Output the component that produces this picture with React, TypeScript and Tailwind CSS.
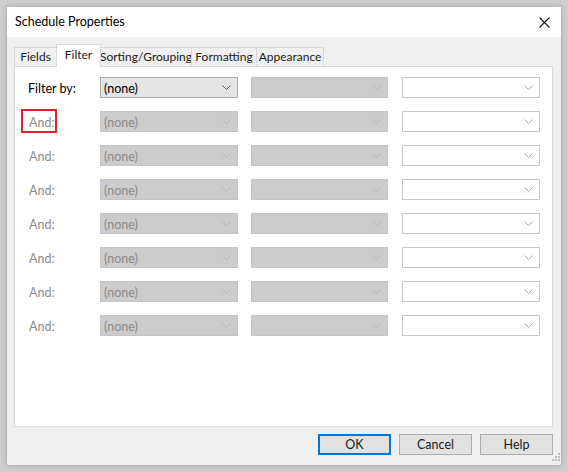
import React from "react";

const font = { fontFamily: 'Lato, "Noto Sans", sans-serif' };

function Chevron({ color }: { color: string }) {
  return (
    <svg width="9" height="5" viewBox="0 0 9 5" className="shrink-0">
      <path d="M0.5 0.5 L4.5 4.5 L8.5 0.5" fill="none" stroke={color} strokeWidth="1" />
    </svg>
  );
}

type Kind = "enabled" | "disabled" | "blank";

function Combo({ kind, text, width }: { kind: Kind; text?: string; width: string }) {
  const styles: Record<Kind, string> = {
    enabled: "bg-[#e5e5e5] border-[#acacac] text-black",
    disabled: "bg-[#cccccc] border-[#c4c4c4] text-[#8a8a8a]",
    blank: "bg-white border-[#c8c8c8] text-black",
  };
  const chevron = kind === "enabled" ? "#5a5a5a" : kind === "disabled" ? "#b4b4b4" : "#a8a8a8";
  return (
    <div className={`${width} h-[21px] border flex items-center justify-between pl-[3px] pr-[6px] ${styles[kind]}`}>
      <span className="text-[12.5px] leading-[15px] pt-px">{text}</span>
      <Chevron color={chevron} />
    </div>
  );
}

function Row({ label, first, boxed }: { label: string; first?: boolean; boxed?: boolean }) {
  return (
    <div className="flex items-center h-[21px]">
      <div className="w-[72px] h-[21px] flex items-center relative">
        <span className={`text-[12.5px] leading-[15px] pt-[2px] ${first ? "text-black" : "text-[#8c8c8c] pl-px"}`}>{label}</span>
        {boxed && (
          <div className="absolute left-[-7px] top-[-2px] w-[36px] h-[24px] border-2 border-[#e0202a]" />
        )}
      </div>
      <Combo kind={first ? "enabled" : "disabled"} text="(none)" width="w-[138px]" />
      <div className="w-[13px]" />
      <Combo kind="disabled" width="w-[137px]" />
      <div className="w-[14px]" />
      <Combo kind="blank" width="w-[138px]" />
    </div>
  );
}

function Tab({ label, width, selected }: { label: string; width: string; selected?: boolean }) {
  return (
    <div
      className={`${width} flex items-center justify-center border-t border-l border-r border-[#d9d9d9] -mr-px text-[12px] ${
        selected ? "h-[23px] bg-white relative z-10 -mb-px pb-[3px]" : "h-[19px] bg-[#f0f0f0]"
      }`}
    >
      {label}
    </div>
  );
}

function Button({ label, primary }: { label: string; primary?: boolean }) {
  return (
    <div
      className={`w-[73px] h-[21px] flex items-center justify-center text-[12.5px] pt-px bg-[#e1e1e1] ${
        primary ? "border-2 border-[#0078d7]" : "border border-[#adadad]"
      }`}
    >
      {label}
    </div>
  );
}

export default function App() {
  const rows = ["And:", "And:", "And:", "And:", "And:", "And:", "And:"];
  return (
    <div className="w-[568px] h-[472px] bg-[#d0d0d0] p-[7px] flex" style={font}>
      <div className="flex-1 flex flex-col bg-[#f0f0f0] shadow-[0_0_0_1px_#b8b8b8,0_0_6px_rgba(0,0,0,0.25)] text-[#1a1a1a]">
        {/* Title bar */}
        <div className="h-[30px] bg-white flex items-center justify-between pl-[8px] pr-[11px] shrink-0">
          <span className="text-[12.5px] text-black">Schedule Properties</span>
          <svg width="11" height="11" viewBox="0 0 11 11">
            <path d="M0.5 0.5 L10.5 10.5 M10.5 0.5 L0.5 10.5" stroke="#1a1a1a" strokeWidth="1.1" />
          </svg>
        </div>

        <div className="flex-1 flex flex-col px-[7px] pt-[7px]">
          {/* Tabs */}
          <div className="flex items-end h-[22px]">
            <Tab label="Fields" width="w-[43px]" />
            <Tab label="Filter" width="w-[45px]" selected />
            <Tab label="Sorting/Grouping" width="w-[92px]" />
            <Tab label="Formatting" width="w-[66px]" />
            <Tab label="Appearance" width="w-[68px]" />
          </div>

          {/* Panel */}
          <div className="w-[539px] h-[361px] bg-white border border-[#d9d9d9] pt-[10px] pl-[13px] flex flex-col gap-[13px]">
            <Row label="Filter by:" first />
            {rows.map((r, i) => (
              <Row key={i} label={r} boxed={i === 0} />
            ))}
          </div>

          {/* Buttons */}
          <div className="flex justify-end gap-[8px] mt-[7px] w-[539px]">
            <Button label="OK" primary />
            <Button label="Cancel" />
            <Button label="Help" />
          </div>

          {/* Resize grip */}
          <div className="flex justify-end -mr-[6px] mt-[-2px]">
            <svg width="8" height="8" viewBox="0 0 8 8">
              {[
                [6, 0],
                [3, 3],
                [6, 3],
                [0, 6],
                [3, 6],
                [6, 6],
              ].map(([x, y], i) => (
                <rect key={i} x={x} y={y} width="2" height="2" fill="#bdbdbd" />
              ))}
            </svg>
          </div>
        </div>
      </div>
    </div>
  );
}
